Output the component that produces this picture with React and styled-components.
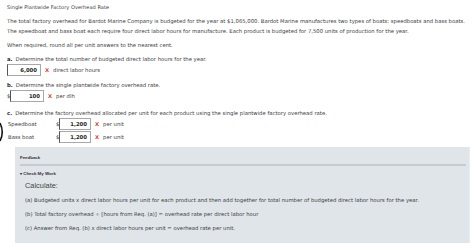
import React from "react";
import styled, { createGlobalStyle } from "styled-components";

const Global = createGlobalStyle`
  html, body {
    margin: 0;
    padding: 0;
    background: #fff;
  }
  body {
    font-family: "DejaVu Sans", Verdana, sans-serif;
    color: #3d3d3d;
    width: 474px;
    height: 247px;
    overflow: hidden;
  }
`;

const Page = styled.div`
  position: relative;
  padding: 2px 7px 0 7px;
  font-size: 5.3px;
  line-height: 10px;
`;

const Title = styled.div`
  margin-bottom: 4px;
  font-size: 5.1px;
`;

const Para = styled.p`
  margin: 0 0 ${(p) => p.$bottom || 4}px 0;
  white-space: nowrap;
`;

const Question = styled.div`
  margin-top: ${(p) => p.$top || 0}px;
  line-height: 9px;
  white-space: nowrap;
`;

const Letter = styled.b`
  color: #1f2a44;
  margin-right: 3px;
`;

const AnswerRow = styled.div`
  display: flex;
  align-items: center;
  height: 12px;
  margin-top: ${(p) => p.$top || 0}px;
`;

const Label = styled.span`
  width: ${(p) => p.$w || 0}px;
  padding-left: 1px;
`;

const Dollar = styled.span`
  width: 3px;
`;

const Input = styled.div`
  width: ${(p) => p.$w}px;
  height: 12px;
  box-sizing: border-box;
  border: 1px solid #a8a8a8;
  border-left: 1.5px solid #555;
  text-align: right;
  padding-right: 3px;
  font-weight: bold;
  line-height: 10px;
  color: #222;
`;

const Wrong = styled.span`
  color: #d8453c;
  font-weight: bold;
  margin: 0 4px 0 4px;
`;

const Paren = styled.svg`
  position: absolute;
  left: 0;
  top: 122px;
`;

const Panel = styled.div`
  margin: 4px -3px 0 8px;
  background: #dfe5e9;
  border-right: 1px solid #e8ecef;
  padding: 7px 3px 10px 5px;
`;

const PanelHead = styled.div`
  font-family: "Liberation Sans", Arial, sans-serif;
  font-size: 4.4px;
  font-weight: bold;
  color: #333;
  line-height: 8px;
  padding-bottom: 2px;
  border-bottom: 2px solid #c4ccd2;
`;

const Toggle = styled.div`
  font-family: "Liberation Sans", Arial, sans-serif;
  font-size: 4.4px;
  font-weight: bold;
  color: #333;
  line-height: 8px;
  margin-top: 4px;
`;

const Calc = styled.div`
  font-family: "Liberation Sans", Arial, sans-serif;
  font-size: 7.4px;
  color: #444;
  margin: 3px 0 0 5px;
  line-height: 10px;
`;

const Step = styled.div`
  font-size: 5.3px;
  margin: 4px 0 0 5px;
  line-height: 10px;
  white-space: nowrap;
`;

export default function App() {
  return (
    <>
      <Global />
      <Page>
        <Title>Single Plantwide Factory Overhead Rate</Title>
        <Para>
          The total factory overhead for Bardot Marine Company is budgeted for the year at $1,065,000. Bardot Marine manufactures two types of boats: speedboats and bass boats.
          <br />
          The speedboat and bass boat each require four direct labor hours for manufacture. Each product is budgeted for 7,500 units of production for the year.
        </Para>
        <Para $bottom={4.5}>When required, round all per unit answers to the nearest cent.</Para>
        <Question>
          <Letter>a.</Letter>Determine the total number of budgeted direct labor hours for the year.
        </Question>
        <AnswerRow>
          <Input $w={34}>6,000</Input>
          <Wrong>X</Wrong>
          <span>direct labor hours</span>
        </AnswerRow>
        <Question $top={5}>
          <Letter>b.</Letter>Determine the single plantwide factory overhead rate.
        </Question>
        <AnswerRow>
          <Dollar>$</Dollar>
          <Input $w={34}>100</Input>
          <Wrong>X</Wrong>
          <span>per dlh</span>
        </AnswerRow>
        <Question $top={7.5}>
          <Letter>c.</Letter>Determine the factory overhead allocated per unit for each product using the single plantwide factory overhead rate.
        </Question>
        <AnswerRow>
          <Label $w={48}>Speedboat</Label>
          <Dollar>$</Dollar>
          <Input $w={32}>1,200</Input>
          <Wrong>X</Wrong>
          <span>per unit</span>
        </AnswerRow>
        <AnswerRow $top={1}>
          <Label $w={48}>Bass boat</Label>
          <Dollar>$</Dollar>
          <Input $w={32}>1,200</Input>
          <Wrong>X</Wrong>
          <span>per unit</span>
        </AnswerRow>
        <Panel>
          <PanelHead>Feedback</PanelHead>
          <Toggle>▾ Check My Work</Toggle>
          <Calc>Calculate:</Calc>
          <Step>(a) Budgeted units x direct labor hours per unit for each product and then add together for total number of budgeted direct labor hours for the year.</Step>
          <Step>(b) Total factory overhead ÷ [hours from Req. (a)] = overhead rate per direct labor hour</Step>
          <Step>(c) Answer from Req. (b) x direct labor hours per unit = overhead rate per unit.</Step>
        </Panel>
        <Paren width="5" height="20" viewBox="0 0 5 20">
          <path d="M0 1 Q4.5 10 0 19" fill="none" stroke="#111" strokeWidth="1.6" />
        </Paren>
      </Page>
    </>
  );
}
